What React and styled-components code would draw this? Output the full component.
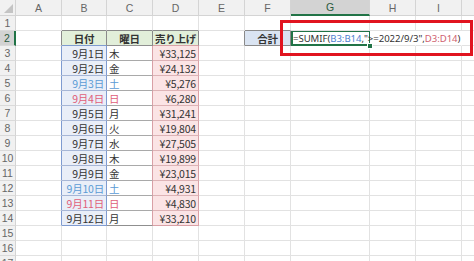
import React from "react";
import styled, { createGlobalStyle } from "styled-components";

const GlobalStyle = createGlobalStyle`
  html, body {
    margin: 0;
    padding: 0;
    background: #fff;
    overflow: hidden;
  }
  body {
    font-family: "Noto Sans CJK JP", "Noto Sans", sans-serif;
  }
`;

// J is only a sliver at the right edge, its letter is off screen
const COLS = ["A", "B", "C", "D", "E", "F", "G", "H", "I", ""];
const WIDTHS = [46, 45, 46, 46, 46, 46, 79, 46, 46, 46];
const ROWS = 17;

const GRID = "#e2e2e2";
const DARK = "#8a8a8a";
const BLUE = "#7f9bd0";
const BLUE_IN = "#a7b6d6";
const GREY_IN = "#a9a9a9";
const PINK = "#d9a0a6";
const PINK_IN = "#ddb3b6";
const GREEN = "#217346";

const Sheet = styled.div`
  position: relative;
  display: grid;
  grid-template-columns: 16px ${WIDTHS.map((w) => w + "px").join(" ")};
  grid-template-rows: 16px repeat(${ROWS}, 15px);
  width: 474px;
  height: 261px;
  overflow: hidden;
  background: #fff;
`;

const Corner = styled.div`
  position: relative;
  background: #f1f1f1;
  border-right: 1px solid #d4d4d4;
  border-bottom: 1px solid #d4d4d4;
  box-sizing: border-box;
  &::after {
    content: "";
    position: absolute;
    right: 2px;
    bottom: 2px;
    border-left: 9px solid transparent;
    border-bottom: 9px solid #c4c4c4;
  }
`;

const ColHead = styled.div`
  display: flex;
  align-items: center;
  justify-content: center;
  box-sizing: border-box;
  background: ${(p) => (p.active ? "#d3d3d3" : "#f1f1f1")};
  border-right: 1px solid #d4d4d4;
  border-bottom: ${(p) => (p.active ? `2px solid ${GREEN}` : "1px solid #d4d4d4")};
  color: ${(p) => (p.active ? "#2a5a3e" : "#666")};
  font-family: "Liberation Sans", sans-serif;
  font-size: 10.5px;
`;

const RowHead = styled.div`
  display: flex;
  align-items: center;
  justify-content: center;
  box-sizing: border-box;
  background: ${(p) => (p.active ? "#d3d3d3" : "#f1f1f1")};
  border-right: ${(p) => (p.active ? `2px solid ${GREEN}` : "1px solid #d4d4d4")};
  border-bottom: 1px solid #dadada;
  color: ${(p) => (p.active ? "#2a5a3e" : "#666")};
  font-family: "Liberation Sans", sans-serif;
  font-size: 10.5px;
`;

const Cell = styled.div`
  position: relative;
  display: flex;
  align-items: center;
  justify-content: ${(p) =>
    p.align === "right" ? "flex-end" : p.align === "center" ? "center" : "flex-start"};
  box-sizing: border-box;
  padding: 0 2px;
  white-space: nowrap;
  background: ${(p) => p.bg || "#fff"};
  border-right: 1px solid ${(p) => p.vr};
  border-bottom: 1px solid ${(p) => p.hb};
  color: ${(p) => p.color || "#333"};
  font-size: 10.5px;
  font-weight: ${(p) => (p.bold ? 700 : 400)};
  letter-spacing: -0.2px;
`;

const Selected = styled(Cell)`
  overflow: visible;
  z-index: 2;
  background: transparent;
  border: none;
  box-shadow: inset 2px 0 0 ${GREEN}, inset 0 -2px 0 ${GREEN}, inset -1px 0 0 ${GREEN},
    inset 0 1px 0 ${GREEN};
  padding-left: 2px;
  color: #333;
  font-family: "Noto Sans", sans-serif;
  font-size: 9.6px;
  letter-spacing: -0.05px;
`;

const Handle = styled.span`
  position: absolute;
  right: -3px;
  bottom: -3px;
  width: 4px;
  height: 4px;
  background: ${GREEN};
  border: 1px solid #fff;
`;

const Ref = styled.span`
  color: ${(p) => p.color};
`;

const RedBox = styled.div`
  position: absolute;
  left: 280px;
  top: 20px;
  width: 193px;
  height: 36px;
  box-sizing: border-box;
  border: 3px solid #e1141f;
  z-index: 3;
`;

const SAT = "#5b9bd5";
const SUN = "#e0607a";

const data = [
  ["9月1日", "木", "¥33,125"],
  ["9月2日", "金", "¥24,132"],
  ["9月3日", "土", "¥5,276", SAT],
  ["9月4日", "日", "¥6,280", SUN],
  ["9月5日", "月", "¥31,241"],
  ["9月6日", "火", "¥19,804"],
  ["9月7日", "水", "¥27,505"],
  ["9月8日", "木", "¥19,899"],
  ["9月9日", "金", "¥23,015"],
  ["9月10日", "土", "¥4,931", SAT],
  ["9月11日", "日", "¥4,830", SUN],
  ["9月12日", "月", "¥33,210"],
];

// colour of the line to the right of column c in row r
function vline(r, c) {
  if (r === 2) {
    if (c >= 0 && c <= 5) return DARK;
    if (c === 7 || c === 8) return "#fff";
  }
  if (r >= 3 && r <= 14) {
    if (c === 0 || c === 1) return BLUE;
    if (c === 2 || c === 3) return PINK;
  }
  return GRID;
}

// colour of the line under row r in column c
function hline(r, c) {
  if (r === 1 && c >= 1 && c <= 3) return DARK;
  if ((r === 1 || r === 2) && c === 5) return DARK;
  if (r >= 2 && r <= 14 && c >= 1 && c <= 3) {
    const last = r === 14 || r === 2;
    if (c === 1) return last ? BLUE : BLUE_IN;
    if (c === 2) return last ? "#8f8f8f" : GREY_IN;
    return last ? PINK : PINK_IN;
  }
  return GRID;
}

function content(r, c) {
  if (r === 2) {
    if (c === 1) return { text: "日付", align: "center", bold: true, bg: "#e2efda" };
    if (c === 2) return { text: "曜日", align: "center", bold: true, bg: "#e2efda" };
    if (c === 3) return { text: "売り上げ", align: "center", bold: true, bg: "#e2efda" };
    if (c === 5) return { text: "合計", align: "center", bold: true, bg: "#dae4f2" };
  }
  if (r >= 3 && r <= 14) {
    const [d, w, v, col] = data[r - 3];
    if (c === 1) return { text: d, align: "right", color: col, bg: "#e9eef8" };
    if (c === 2) return { text: w, align: "left", color: col };
    if (c === 3) return { text: v, align: "right", bg: "#fbe4e5" };
  }
  return null;
}

function Formula() {
  return (
    <Selected vr="transparent" hb="transparent">
      =SUMIF(<Ref color="#4f7fcf">B3:B14</Ref>,"&gt;=2022/9/3",
      <Ref color="#cf5f6f">D3:D14</Ref>)
      <Handle />
    </Selected>
  );
}

export default function App() {
  const cells = [];
  cells.push(<Corner key="corner" />);
  COLS.forEach((name, c) => {
    cells.push(
      <ColHead key={"h" + c} active={name === "G"}>
        {name}
      </ColHead>
    );
  });
  for (let r = 1; r <= ROWS; r++) {
    cells.push(
      <RowHead key={"r" + r} active={r === 2}>
        {r}
      </RowHead>
    );
    COLS.forEach((name, c) => {
      if (r === 2 && c === 6) {
        cells.push(<Formula key="G2" />);
        return;
      }
      const info = content(r, c) || {};
      cells.push(
        <Cell
          key={c + "-" + r}
          vr={vline(r, c)}
          hb={hline(r, c)}
          align={info.align}
          bold={info.bold}
          bg={info.bg}
          color={info.color}
        >
          {info.text}
        </Cell>
      );
    });
  }

  return (
    <>
      <GlobalStyle />
      <Sheet>
        {cells}
        <RedBox />
      </Sheet>
    </>
  );
}
